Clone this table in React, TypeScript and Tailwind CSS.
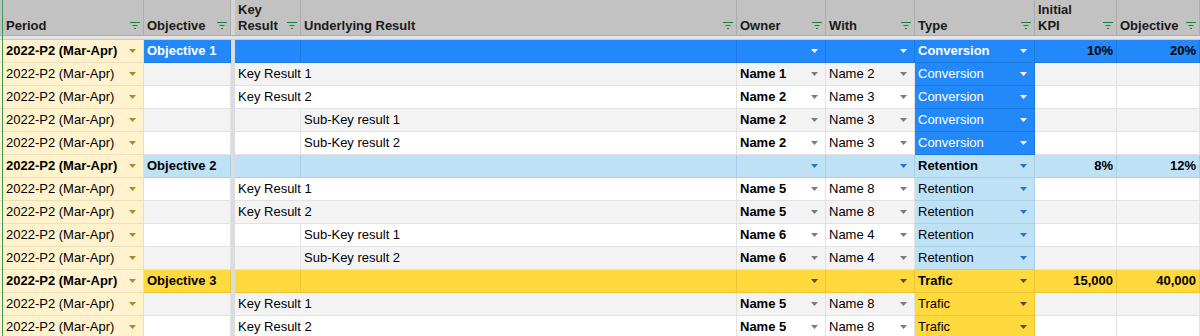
import React from "react"
import clsx from "clsx"

type Theme = "blue" | "sky" | "sun"

type Row = {
  obj?: string
  kr?: string
  sub?: string
  owner?: string
  mate?: string
  type: string
  theme: Theme
  kpi?: string
  goal?: string
}

const themes: Record<Theme, { bg: string; line: string; text: string; arrow: string }> = {
  blue: { bg: "bg-[#2389fa]", line: "border-[#1b7ae2]", text: "text-white", arrow: "#ffffff" },
  sky: { bg: "bg-[#bfe1f6]", line: "border-[#a9d0ea]", text: "text-black", arrow: "#2273d6" },
  sun: { bg: "bg-[#ffd93d]", line: "border-[#ecc532]", text: "text-black", arrow: "#5c4a16" },
}

const rows: Row[] = [
  { obj: "Objective 1", type: "Conversion", theme: "blue", kpi: "10%", goal: "20%" },
  { kr: "Key Result 1", owner: "Name 1", mate: "Name 2", type: "Conversion", theme: "blue" },
  { kr: "Key Result 2", owner: "Name 2", mate: "Name 3", type: "Conversion", theme: "blue" },
  { sub: "Sub-Key result 1", owner: "Name 2", mate: "Name 3", type: "Conversion", theme: "blue" },
  { sub: "Sub-Key result 2", owner: "Name 2", mate: "Name 3", type: "Conversion", theme: "blue" },
  { obj: "Objective 2", type: "Retention", theme: "sky", kpi: "8%", goal: "12%" },
  { kr: "Key Result 1", owner: "Name 5", mate: "Name 8", type: "Retention", theme: "sky" },
  { kr: "Key Result 2", owner: "Name 5", mate: "Name 8", type: "Retention", theme: "sky" },
  { sub: "Sub-Key result 1", owner: "Name 6", mate: "Name 4", type: "Retention", theme: "sky" },
  { sub: "Sub-Key result 2", owner: "Name 6", mate: "Name 4", type: "Retention", theme: "sky" },
  { obj: "Objective 3", type: "Trafic", theme: "sun", kpi: "15,000", goal: "40,000" },
  { kr: "Key Result 1", owner: "Name 5", mate: "Name 8", type: "Trafic", theme: "sun" },
  { kr: "Key Result 2", owner: "Name 5", mate: "Name 8", type: "Trafic", theme: "sun" },
]

const cols = "grid grid-cols-[144px_87px_4px_66px_436px_89px_89px_120px_82px_83px]"

const Caret = ({ color }: { color: string }) => (
  <svg width="7" height="4" viewBox="0 0 7 4" className="ml-auto mr-[4px] shrink-0">
    <path d="M0 0h7L3.5 4z" fill={color} />
  </svg>
)

const FilterIcon = () => (
  <svg width="10" height="7" viewBox="0 0 10 7" className="mb-[5px] ml-auto shrink-0">
    <path d="M0 0.5h10M2.5 3.5h5M4 6.5h2" stroke="#188038" strokeWidth="1" />
  </svg>
)

const HeadCell = ({ lines, className }: { lines: string[]; className?: string }) => (
  <div
    className={clsx(
      "flex h-[36px] items-end border-r border-b border-[#acacac] bg-[#c2c2c2] px-[3px] pb-[1px]",
      className
    )}>
    <div className="text-[13px] leading-[16px] font-bold text-[#1a1a1a]">
      {lines.map(l => (
        <div key={l}>{l}</div>
      ))}
    </div>
    <FilterIcon />
  </div>
)

const Cell = ({
  className,
  children,
}: {
  className?: string
  children?: React.ReactNode
}) => (
  <div
    className={clsx(
      "flex h-[23px] items-center border-r border-b px-[3px] whitespace-nowrap",
      className
    )}>
    {children}
  </div>
)

const App = () => {
  return (
    <div className="relative h-[336px] w-[1200px] overflow-hidden bg-white font-['Liberation_Sans',Arial,sans-serif] text-[13px] text-black">
      <div className={cols}>
        <HeadCell lines={["Period"]} className="pl-[6px]" />
        <HeadCell lines={["Objective"]} />
        <div className="h-[36px] border-b border-[#acacac] bg-[#d4d4d4]" />
        <HeadCell lines={["Key", "Result"]} />
        <HeadCell lines={["Underlying Result"]} />
        <HeadCell lines={["Owner"]} />
        <HeadCell lines={["With"]} />
        <HeadCell lines={["Type"]} />
        <HeadCell lines={["Initial", "KPI"]} />
        <HeadCell lines={["Objective"]} />
      </div>
      <div className="h-[4px] border-b border-[#c9c9c9] bg-[#e3e3e3]" />

      {rows.map((r, i) => {
        const t = themes[r.theme]
        const isObj = !!r.obj
        const zebra = i % 2 === 1 ? "bg-[#f3f3f3]" : "bg-white"
        const plain = clsx(zebra, "border-[#e2e2e2]")
        const rowBg = isObj ? clsx(t.bg, t.line) : plain
        return (
          <div key={i} className={cols}>
            <Cell
              className={clsx("border-[#ecdfb9] bg-[#fff2cc] pl-[6px]", isObj && "font-bold")}>
              2022-P2 (Mar-Apr)
              <Caret color="#b4882a" />
            </Cell>
            <Cell className={clsx(rowBg, "font-bold", isObj && t.text)}>{r.obj}</Cell>
            <div className="h-[23px] bg-[#dadce0]" />
            <Cell
              className={clsx(
                rowBg,
                "relative z-10 overflow-visible",
                r.kr && "border-r-transparent"
              )}>
              {r.kr}
            </Cell>
            <Cell className={rowBg}>{r.sub}</Cell>
            <Cell className={clsx(rowBg, "font-bold")}>
              {r.owner}
              <Caret color={isObj ? t.arrow : "#7c7c7c"} />
            </Cell>
            <Cell className={rowBg}>
              {r.mate}
              <Caret color={isObj ? t.arrow : "#7c7c7c"} />
            </Cell>
            <Cell className={clsx(t.bg, t.line, t.text, isObj && "font-bold")}>
              {r.type}
              <Caret color={t.arrow} />
            </Cell>
            <Cell className={clsx(rowBg, "justify-end font-bold")}>{r.kpi}</Cell>
            <Cell className={clsx(rowBg, "justify-end font-bold")}>{r.goal}</Cell>
          </div>
        )
      })}

      <div className="absolute top-0 bottom-0 left-[2px] w-px bg-[#3c9a57]" />
    </div>
  )
}

export default App
